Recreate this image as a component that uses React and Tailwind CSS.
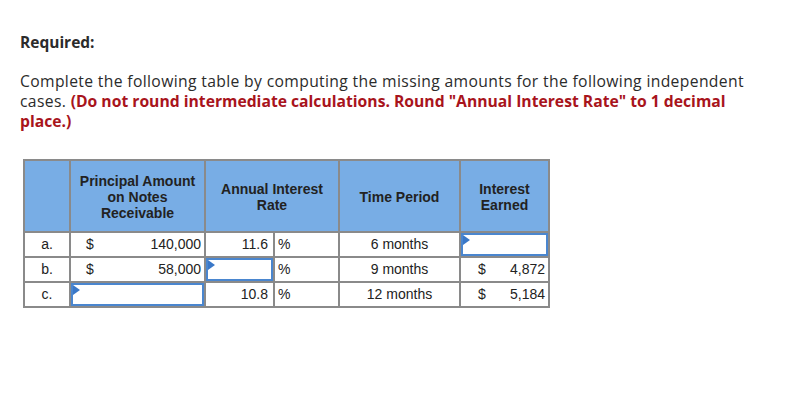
import React from 'react'

const cellText = "font-['Liberation_Sans',Arial,sans-serif] text-[14px] text-[#222]"

function InputBox() {
    return (
        <div className="relative h-[23px] w-full border-2 border-[#4a86cf] bg-white">
            <span className="absolute left-0 top-0 h-0 w-0 border-y-[5px] border-l-[7px] border-y-transparent border-l-[#3a78c8]"></span>
        </div>
    )
}

export default function App() {
    return (
        <div className="min-h-[402px] w-[796px] bg-white px-[20px] pt-[31px] font-['Open_Sans','Lato',sans-serif] text-[#2b2b2b]">
            <h2 className="text-[15.5px] font-bold leading-[22px]">Required:</h2>

            <p className="mt-[18px] w-[740px] text-[15.7px] leading-[20px] tracking-[0.35px]">
                Complete the following table by computing the missing amounts for the following independent
                cases. <span className="font-bold tracking-normal text-[#a8141c]">(Do not round intermediate calculations. Round "Annual Interest Rate" to 1 decimal place.)</span>
            </p>

            <table className={`mt-[28px] ml-[3px] border-collapse ${cellText}`}>
                <colgroup>
                    <col className="w-[46px]" />
                    <col className="w-[135px]" />
                    <col className="w-[69px]" />
                    <col className="w-[65px]" />
                    <col className="w-[121px]" />
                    <col className="w-[89px]" />
                </colgroup>
                <thead>
                    <tr className="h-[72px] bg-[#78ade5] font-bold leading-[16px]">
                        <th className="border-2 border-[#8a8a8a]"></th>
                        <th className="border-2 border-[#8a8a8a] px-1 pt-[2px] font-bold">Principal Amount<br />on Notes<br />Receivable</th>
                        <th colSpan={2} className="border-2 border-[#8a8a8a] px-1 pt-[2px] font-bold">Annual Interest<br />Rate</th>
                        <th className="border-2 border-[#8a8a8a] px-1 pt-[2px] font-bold">Time Period</th>
                        <th className="border-2 border-[#8a8a8a] px-1 pt-[2px] font-bold">Interest<br />Earned</th>
                    </tr>
                </thead>
                <tbody>
                    <tr className="h-[25px]">
                        <td className="border-2 border-[#8a8a8a] text-center">a.</td>
                        <td className="border-2 border-[#8a8a8a] px-[3px]">
                            <div className="flex justify-between pl-[12px]"><span>$</span><span>140,000</span></div>
                        </td>
                        <td className="border-2 border-r-0 border-[#8a8a8a] pr-[5px] text-right">11.6</td>
                        <td className="border-2 border-[#8a8a8a] pl-[3px]">%</td>
                        <td className="border-2 border-[#8a8a8a] text-center">6 months</td>
                        <td className="border-2 border-[#8a8a8a] p-0"><InputBox /></td>
                    </tr>
                    <tr className="h-[25px]">
                        <td className="border-2 border-[#8a8a8a] text-center">b.</td>
                        <td className="border-2 border-[#8a8a8a] px-[3px]">
                            <div className="flex justify-between pl-[12px]"><span>$</span><span>58,000</span></div>
                        </td>
                        <td className="border-2 border-r-0 border-[#8a8a8a] p-0"><InputBox /></td>
                        <td className="border-2 border-[#8a8a8a] pl-[3px]">%</td>
                        <td className="border-2 border-[#8a8a8a] text-center">9 months</td>
                        <td className="border-2 border-[#8a8a8a] px-[3px]">
                            <div className="flex justify-between pl-[14px]"><span>$</span><span>4,872</span></div>
                        </td>
                    </tr>
                    <tr className="h-[25px]">
                        <td className="border-2 border-[#8a8a8a] text-center">c.</td>
                        <td className="border-2 border-[#8a8a8a] p-0"><InputBox /></td>
                        <td className="border-2 border-r-0 border-[#8a8a8a] pr-[5px] text-right">10.8</td>
                        <td className="border-2 border-[#8a8a8a] pl-[3px]">%</td>
                        <td className="border-2 border-[#8a8a8a] text-center">12 months</td>
                        <td className="border-2 border-[#8a8a8a] px-[3px]">
                            <div className="flex justify-between pl-[14px]"><span>$</span><span>5,184</span></div>
                        </td>
                    </tr>
                </tbody>
            </table>
        </div>
    )
}
